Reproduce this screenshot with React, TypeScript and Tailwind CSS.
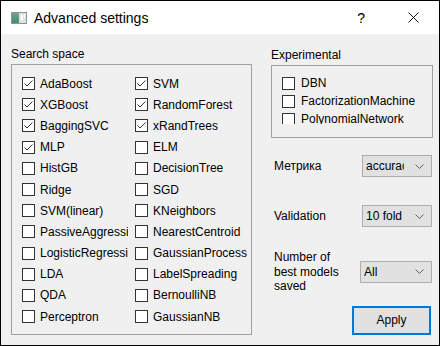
import React from 'react';

const font = "font-['Segoe_UI','Liberation_Sans',Arial,sans-serif]";

const Box = ({ checked }: { checked?: boolean }) => (
  <span className="w-[13px] h-[13px] border border-[#333333] bg-white shrink-0 flex items-center justify-center">
    {checked && (
      <svg width="11" height="11" viewBox="0 0 11 11">
        <path d="M1.5 5.5 L4 8 L9.5 2.5" fill="none" stroke="#333333" strokeWidth="1" />
      </svg>
    )}
  </span>
);

const Item = ({ label, checked, gap = 'gap-[5px]' }: { label: string; checked?: boolean; gap?: string }) => (
  <div className={`flex items-center ${gap} overflow-hidden whitespace-nowrap`}>
    <Box checked={checked} />
    <span className="leading-[16px]">{label}</span>
  </div>
);

const Chevron = () => (
  <svg width="9" height="5" viewBox="0 0 9 5" className="shrink-0">
    <path d="M0.5 0.5 L4.5 4.5 L8.5 0.5" fill="none" stroke="#606060" strokeWidth="1" />
  </svg>
);

const Combo = ({ value, w, textW }: { value: string; w: string; textW: string }) => (
  <div className={`${w} h-[22px] bg-[#e1e1e1] border border-[#adadad] flex items-center pl-[3px] pr-[7px]`}>
    <span className={`${textW} overflow-hidden whitespace-nowrap leading-[16px]`}>{value}</span>
    <span className="ml-auto">
      <Chevron />
    </span>
  </div>
);

const models: [string, boolean][] = [
  ['AdaBoost', true], ['SVM', true],
  ['XGBoost', true], ['RandomForest', true],
  ['BaggingSVC', true], ['xRandTrees', true],
  ['MLP', true], ['ELM', false],
  ['HistGB', false], ['DecisionTree', false],
  ['Ridge', false], ['SGD', false],
  ['SVM(linear)', false], ['KNeighbors', false],
  ['PassiveAggressive', false], ['NearestCentroid', false],
  ['LogisticRegression', false], ['GaussianProcess', false],
  ['LDA', false], ['LabelSpreading', false],
  ['QDA', false], ['BernoulliNB', false],
  ['Perceptron', false], ['GaussianNB', false],
];

export default function App() {
  return (
    <div className={`w-[440px] h-[346px] border border-black flex flex-col text-[12px] text-black ${font}`}>
      {/* Title bar */}
      <div className="h-[33px] bg-white flex items-center pl-[10px] shrink-0">
        <svg width="16" height="12" viewBox="0 0 16 12" className="shrink-0">
          <defs>
            <linearGradient id="ic" x1="0" y1="0" x2="0" y2="1">
              <stop offset="0" stopColor="#7f9a98" />
              <stop offset="1" stopColor="#3a9463" />
            </linearGradient>
          </defs>
          <rect x="0.5" y="0.5" width="15" height="11" fill="#dfe3e3" stroke="#8a9696" />
          <rect x="1" y="1" width="7" height="10" fill="url(#ic)" />
          <rect x="10" y="3" width="2" height="5" fill="#ffffff" />
          <rect x="13" y="2" width="1" height="4" fill="#ffffff" />
        </svg>
        <span className="ml-[7px] text-[14px] leading-[18px]">Advanced settings</span>
        <span className="ml-auto text-[14px] leading-[18px] mr-[43px]">?</span>
        <svg width="11" height="11" viewBox="0 0 11 11" className="mr-[20px]">
          <path d="M0.5 0.5 L10.5 10.5 M10.5 0.5 L0.5 10.5" stroke="#111111" strokeWidth="1" />
        </svg>
      </div>

      {/* Content */}
      <div className="flex-1 bg-[#f0f0f0] flex pl-[10px] pt-[12px]">
        {/* Search space */}
        <div className="flex flex-col w-[241px] shrink-0">
          <div className="h-[18px] leading-[16px]">Search space</div>
          <div className="h-[271px] border border-[#a0a0a0] pt-[8px] pl-[10px]">
            <div className="grid grid-cols-[106px_114px] gap-x-[7px] auto-rows-[21.2px]">
              {models.map(([name, checked]) => (
                <Item key={name} label={name} checked={checked} />
              ))}
            </div>
          </div>
        </div>

        {/* Right column */}
        <div className="flex flex-col w-[162px] ml-[19px] shrink-0">
          <div className="h-[18px] leading-[16px] mt-[1px]">Experimental</div>
          <div className="h-[73px] border border-[#a0a0a0] pt-[8px] pl-[10px]">
            <div className="h-[50px] overflow-hidden flex flex-col">
              {['DBN', 'FactorizationMachine', 'PolynomialNetwork'].map((n) => (
                <div key={n} className="h-[18px] shrink-0 flex items-center">
                  <Item label={n} gap="gap-[6px]" />
                </div>
              ))}
            </div>
          </div>

          <div className="flex items-center h-[22px] mt-[17px]">
            <span className="pl-[3px] leading-[16px]">Метрика</span>
            <div className="ml-auto mr-[1px]">
              <Combo value="accuracy" w="w-[70px]" textW="w-[38px]" />
            </div>
          </div>

          <div className="flex items-center h-[22px] mt-[28px]">
            <span className="pl-[3px] leading-[16px]">Validation</span>
            <div className="ml-auto mr-[1px]">
              <Combo value="10 fold CV" w="w-[70px]" textW="w-[39px]" />
            </div>
          </div>

          <div className="flex items-center mt-[23px]">
            <span className="pl-[3px] w-[78px] leading-[14.5px]">Number of best models saved</span>
            <div className="ml-auto mr-[1px]">
              <Combo value="All" w="w-[72px]" textW="w-[40px]" />
            </div>
          </div>

          <div className="flex mt-[12px]">
            <button className="ml-auto mr-[2px] w-[79px] h-[29px] bg-[#e1e1e1] border-2 border-[#0078d7] leading-[16px]">
              Apply
            </button>
          </div>
        </div>
      </div>
    </div>
  );
}
